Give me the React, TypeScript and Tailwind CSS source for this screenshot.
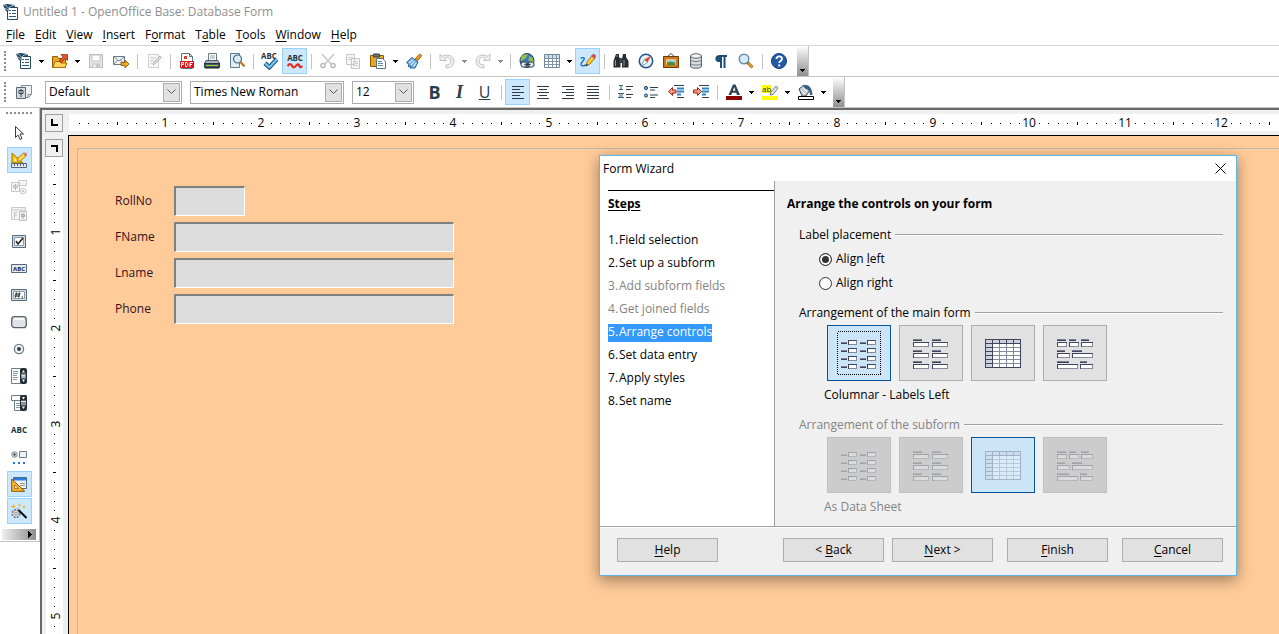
import type { ReactNode } from "react";
import clsx from "clsx";

// "&" marks the accelerator key, as in a menu resource
function Mnemonic({ text }: { text: string }) {
  const at = text.indexOf("&");
  if (at < 0) return <>{text}</>;
  return (
    <span className="whitespace-pre">
      {text.slice(0, at)}
      <u className="underline-offset-2">{text[at + 1]}</u>
      {text.slice(at + 2)}
    </span>
  );
}

function Svg({ children, size = 16 }: { children: ReactNode; size?: number }) {
  return (
    <svg width={size} height={size} viewBox="0 0 16 16" fill="none" aria-hidden="true">
      {children}
    </svg>
  );
}

const writerIcon = (
  <Svg>
    <path d="M4.500 3.500h10v12h-10z" fill="#fff" stroke="#2c4a5e" />
    <path d="M0 1l4-1 8 1v3H6l-1 4-2-1z" fill="#20465e" />
    <path d="M1 1c2 .3 3.500 1.500 4.500 3.500C7 2 9 1.500 12 1.500M2 4l3 2" stroke="#a9c2d1" />
    <path d="M6 6.500h2M9 6.500h4M6 9.500h2M9 9.500h4M6 12.500h7" stroke="#2c5f82" />
  </Svg>
);

const icons: Record<string, ReactNode> = {
  open: (
    <Svg>
      <path d="M.5 14.500v-11h5l1 2h7v9z" fill="#e8a91f" stroke="#9a5b00" />
      <path d="M1 14.500l2-6h5l1 1.500h6l-2 4.500z" fill="#ffd35c" stroke="#b06f00" />
      <path d="M7 8l4-4-2-2.500h6.500V7.500l-2.200-2-4 4z" fill="#e4572e" stroke="#8d2000" strokeWidth=".7" />
    </Svg>
  ),
  save: (
    <Svg>
      <path d="M1.500 1.500h13v13h-13z" fill="#e6e6e6" stroke="#b9b9b9" />
      <path d="M4 2h8v6H4z" fill="#fff" stroke="#c4c4c4" />
      <path d="M4 10.500h8V15H4z" fill="#c9c9c9" />
      <path d="M5.500 11.500h2V14h-2z" fill="#fff" />
    </Svg>
  ),
  mail: (
    <Svg>
      <path d="M.5 3.500h11v8H.5z" fill="#eef1f4" stroke="#6a7986" />
      <path d="M1 4l5 4 5-4M1 11l3.500-4M11 11L7.500 7" stroke="#7d8b97" />
      <path d="M8 9.500h4V7l4 4-4 4v-2.500H8z" fill="#f6a623" stroke="#8c4a00" strokeWidth=".8" />
    </Svg>
  ),
  edit: (
    <Svg>
      <path d="M2.500 1.500h10v13h-10z" fill="#f7f7f7" stroke="#d0d0d0" />
      <path d="M4.500 5h5M4.500 7.500h3M4.500 10h2" stroke="#c6c6c6" />
      <path d="M7 12l1-3 6-6 1.500 1.500-6 6z" fill="#dcdcdc" stroke="#b8b8b8" />
    </Svg>
  ),
  pdf: (
    <Svg>
      <path d="M2.500.5h8l3 3v12h-11z" fill="#fff" stroke="#5b7285" />
      <path d="M10.500.5v3h3" stroke="#5b7285" />
      <path d="M5 3h3v3H5z" fill="#d7432f" />
      <path d="M1 8h14v7H1z" fill="#e01515" />
      <path d="M2.500 14v-4.500h2v2h-2M6.500 9.500v4h1.500l.8-.8V10.300l-.8-.8zM11 14V9.500h3M11 11.500h2" stroke="#fff" />
    </Svg>
  ),
  print: (
    <Svg>
      <path d="M4.500.5h8v8h-8z" fill="#fff" stroke="#6c7a86" />
      <path d="M6 3h5M6 5h5" stroke="#8fa3b3" />
      <path d="M2 7.500h12l1.500 3H.5z" fill="#a9b4bd" stroke="#4a5a66" />
      <path d="M.5 10.500h15v4H.5z" fill="#4a5a66" stroke="#26333d" />
      <path d="M2 12.500h12" stroke="#8fd12e" />
      <path d="M1 15h14" stroke="#17212a" />
    </Svg>
  ),
  preview: (
    <Svg>
      <path d="M1.500.5h9v14h-9z" fill="#e3ebf2" stroke="#5d7990" />
      <circle cx="8.500" cy="6" r="4" fill="#d4ecfa" stroke="#45657f" strokeWidth="1.200" />
      <path d="M11.500 9l4 4.500" stroke="#c1791b" strokeWidth="2.400" />
    </Svg>
  ),
  spell: (
    <Svg size={18}>
      <text x="0" y="6" className="fill-[#26303a] font-bold" fontSize="7">ABC</text>
      <path d="M3.500 10l4 3.500L14 6.500" stroke="#1c5687" strokeWidth="4" />
      <path d="M3.500 10l4 3.500L14 6.500" stroke="#7fc4ee" strokeWidth="2" />
    </Svg>
  ),
  autospell: (
    <Svg size={18}>
      <text x="1" y="8" className="fill-[#26303a] font-bold" fontSize="7">ABC</text>
      <path d="M1.500 12.500c1.500-2.500 3-2 4 0s2.500 1 3.500-.5 2.500-1.500 3 .5 2 .5 2.500 0" stroke="#e02b20" strokeWidth="2" />
    </Svg>
  ),
  cut: (
    <Svg>
      <path d="M2 1l9 10M14 1L5 11" stroke="#c9c9c9" strokeWidth="1.600" />
      <circle cx="3" cy="12.500" r="2" stroke="#b9b9b9" strokeWidth="1.500" />
      <circle cx="13" cy="12.500" r="2" stroke="#b9b9b9" strokeWidth="1.500" />
    </Svg>
  ),
  copy: (
    <Svg>
      <path d="M1.500 1.500h8v10h-8zM6.500 5.500h8v10h-8z" fill="#f6f6f6" stroke="#c6c6c6" />
      <path d="M3 4.500h5M3 6.500h3M8 8.500h5M8 10.500h5M8 12.500h5" stroke="#d0d0d0" />
    </Svg>
  ),
  paste: (
    <Svg>
      <path d="M.5 2.500h13v11H.5z" fill="#e9a820" stroke="#8b5a00" />
      <path d="M3.500 1h6v3h-6z" fill="#6a747d" stroke="#39434c" />
      <path d="M6.500 5.500h6l3 3v7h-9z" fill="#fff" stroke="#53748c" />
      <path d="M8 8.500h4M8 10.500h5M8 12.500h5" stroke="#5f88a6" />
    </Svg>
  ),
  brush: (
    <Svg>
      <path d="M9 6l4.500-5L16 2.500 11.500 8z" fill="#e0952a" stroke="#8c4e00" strokeWidth=".7" />
      <path d="M.5 9.500L6 4.500l6 4.500-3 6H4l1-2-3 .5 1-2z" fill="#7fb5e3" stroke="#25609a" />
      <path d="M3 10l4-3M5 12l3.500-3.500M8 13.500L10 10" stroke="#dff0fc" />
    </Svg>
  ),
  undo: (
    <Svg>
      <path d="M1 1v6.500h6.500L5 5.500C8 3 12 5 12 8s-2 4-5 4v3c5 0 8-3 8-7C15 2.500 8 .5 3 3.500z" fill="#f0f0f0" stroke="#c2c2c2" />
    </Svg>
  ),
  redo: (
    <Svg>
      <path d="M15 1v6.500H8.500L11 5.500C8 3 4 5 4 8s2 4 5 4v3c-5 0-8-3-8-7C1 2.500 8 .5 13 3.500z" fill="#f0f0f0" stroke="#c2c2c2" />
    </Svg>
  ),
  globe: (
    <Svg>
      <circle cx="8" cy="7.500" r="7" fill="#3b78b5" stroke="#23415c" />
      <path d="M2 4c2-3 5-3 7-2.500L7 5 4 7 1.500 8zM10 3l4 2 .5 4-3 1-2-3z" fill="#8fbd4f" />
      <rect x="2" y="9" width="6" height="5" rx="2" fill="#e4e8ea" stroke="#2e3b44" />
      <rect x="9" y="9" width="6" height="5" rx="2" fill="#e4e8ea" stroke="#2e3b44" />
      <path d="M5.500 11.500h6" stroke="#2e3b44" strokeWidth="1.500" />
    </Svg>
  ),
  table: (
    <Svg>
      <path d="M.5 1.500h15v13H.5z" fill="#fff" stroke="#6f8799" />
      <path d="M1 2h14v3H1z" fill="#cfdde8" />
      <path d="M1 5.500h14M1 8.500h14M1 11.500h14M4.500 2v12M8.500 2v12M12.500 2v12" stroke="#7f95a6" />
    </Svg>
  ),
  draw: (
    <Svg>
      <path d="M.5 5.500c2-1.500 4.500-1 3.500 1S1 9.500 1 11.500s3 1.500 5 .5" stroke="#1b6fd0" strokeWidth="1.400" />
      <path d="M6 13l1-4 5-6.500 3 2.500-5 6z" fill="#ffce3a" stroke="#8a5a00" strokeWidth=".8" />
      <path d="M11.500 3l2-2L16 3l-1.500 2.500z" fill="#e8545d" stroke="#8a2a30" strokeWidth=".5" />
      <path d="M6 13l.6-2.200 1.600 1.400z" fill="#222" />
    </Svg>
  ),
  find: (
    <Svg>
      <path d="M3 1h3v3l1.500 2v8.500H.5V8zM10 1h3v3l2.500 4v6.500H9V6z" fill="#272c31" />
      <path d="M6.500 5h3v5h-3z" fill="#3d454c" />
      <path d="M2.500 7v6M11 7v6M4 2v2" stroke="#8d99a3" />
    </Svg>
  ),
  compass: (
    <Svg>
      <circle cx="8" cy="8" r="6.700" fill="#e6f0f8" stroke="#22568c" strokeWidth="1.500" />
      <path d="M13 2.500L9.500 9.500 6.500 6.500z" fill="#e8432d" />
      <path d="M3 13.500l3.500-7 3 3z" fill="#fff" stroke="#5b6c7a" strokeWidth=".7" />
    </Svg>
  ),
  gallery: (
    <Svg>
      <path d="M5 3l3-2.500L11 3" stroke="#555" />
      <path d="M.5 3.500h15v11H.5z" fill="#c77a1f" stroke="#6e3b00" />
      <path d="M3.500 6.500h9v5h-9z" fill="#9bd1f2" stroke="#f2c36b" />
      <path d="M4 9.500l3-1 5 1V12H4z" fill="#4e8b33" />
    </Svg>
  ),
  database: (
    <Svg>
      <path d="M2.500 3v10c0 3 11 3 11 0V3" fill="#d9dde0" stroke="#59636b" />
      <ellipse cx="8" cy="3" rx="5.500" ry="2.200" fill="#f3f5f6" stroke="#59636b" />
      <path d="M2.500 6.500c0 2.700 11 2.700 11 0M2.500 10c0 2.700 11 2.700 11 0" stroke="#737d85" />
    </Svg>
  ),
  pilcrow: (
    <Svg>
      <path d="M14 2H7C1 2 1 9 6 9h1v6h2V4h1.500v11h2V4H14z" fill="#1e4d78" />
    </Svg>
  ),
  zoom: (
    <Svg>
      <circle cx="6" cy="6" r="4.800" fill="#d3ebfa" stroke="#6b8ba5" strokeWidth="1.400" />
      <path d="M9.500 9.500l5 5" stroke="#8c5210" strokeWidth="3" />
      <path d="M10 10l4.500 4.500" stroke="#f0b03f" strokeWidth="1.500" />
    </Svg>
  ),
  help: (
    <Svg>
      <circle cx="8" cy="8" r="7.500" fill="#2459a8" stroke="#163c79" />
      <path d="M5.500 6c0-3.500 5.500-3.500 5.500-.3C11 8 8.200 7.800 8.200 10" stroke="#fff" strokeWidth="1.900" />
      <path d="M7.200 11.500h2v2h-2z" fill="#fff" />
    </Svg>
  ),
  styles: (
    <Svg>
      <path d="M5.500 1.500h10v9l-3 3h-7z" fill="#eef1f3" stroke="#7e8d98" />
      <path d="M15 10.500h-3v3" stroke="#7e8d98" />
      <path d="M.5 3.500h9v11h-9z" fill="#d3dbe1" stroke="#5d6c78" />
      <path d="M3 6.500h4v3H3zM5 5v8" fill="#fff" stroke="#34424d" />
    </Svg>
  ),
  left: <Svg><path d="M2 2.500h12M2 5.500h8M2 8.500h12M2 11.500h8M2 14.500h12" stroke="#2f3a42" /></Svg>,
  center: <Svg><path d="M2 2.500h12M4 5.500h8M2 8.500h12M4 11.500h8M2 14.500h12" stroke="#2f3a42" /></Svg>,
  right: <Svg><path d="M2 2.500h12M6 5.500h8M2 8.500h12M6 11.500h8M2 14.500h12" stroke="#2f3a42" /></Svg>,
  justify: <Svg><path d="M2 2.500h12M2 5.500h12M2 8.500h12M2 11.500h12M2 14.500h12" stroke="#2f3a42" /></Svg>,
  numbered: (
    <Svg>
      <path d="M1 1.500h4M3 1.500v4M1 5.500h4M0 9.500h6M2 9.500v4M4 9.500v4M0 13.500h6" stroke="#3b6384" />
      <path d="M8 2.500h7M8 5.500h5M8 10.500h7M8 13.500h5" stroke="#333c44" />
    </Svg>
  ),
  bullets: (
    <Svg>
      <circle cx="3" cy="4" r="1.600" fill="#7fb2da" stroke="#204a6d" />
      <circle cx="3" cy="11.500" r="1.600" fill="#7fb2da" stroke="#204a6d" />
      <path d="M7 3.500h8M7 6h5M7 11h8M7 13.500h5" stroke="#333c44" />
    </Svg>
  ),
  outdent: (
    <Svg>
      <path d="M6 1.500h10M9 13.500h7" stroke="#333c44" />
      <path d="M9 4.500h7M9 7.500h7M9 10.500h4" stroke="#2c86c8" strokeWidth="2" />
      <path d="M.5 7.500l4-4V6H8v3H4.500v2.500z" fill="#f2a08a" stroke="#a02411" />
    </Svg>
  ),
  indent: (
    <Svg>
      <path d="M6 1.500h10M9 13.500h7" stroke="#333c44" />
      <path d="M9 4.500h7M9 7.500h7M9 10.500h4" stroke="#2c86c8" strokeWidth="2" />
      <path d="M8.500 7.500l-4-4V6H.5v3h4v2.500z" fill="#f2a08a" stroke="#a02411" />
    </Svg>
  ),
  fontcolor: (
    <Svg>
      <path d="M2.500 11L7 .5h2.500L14 11h-3l-.8-2.300H6L5.300 11z" fill="#2b4357" />
      <path d="M6.800 6.700h2.700L8.200 3z" fill="#fff" />
      <path d="M0 12h16v4H0z" fill="#8b0000" />
    </Svg>
  ),
  highlight: (
    <Svg>
      <path d="M0 1h9v8H0z" fill="#ffff00" />
      <text x="0" y="8" fontSize="8" className="fill-[#26303a]">ab</text>
      <path d="M8 11l1-3 5-6 2 2-5 6.500z" fill="#dfe6ea" stroke="#53616b" strokeWidth=".8" />
      <path d="M0 12h16v4H0z" fill="#ffff00" />
    </Svg>
  ),
  fill: (
    <Svg>
      <path d="M1 5l5-4 6 5-4 6H4z" fill="#c3ccd2" stroke="#3f4b54" />
      <path d="M5 1.500c5-2 9 1 9.500 9.500H12c0-4-2-6-5-6.500" fill="#33617f" />
      <path d="M3 6l4 4M5 4l4 4" stroke="#f4f6f7" />
      <path d="M.5 12.500h15v3H.5z" fill="#fff" stroke="#000" />
    </Svg>
  ),
  pointer: (
    <Svg>
      <path d="M4.500 1.500v11l2.500-2.500 2 4.500 2-1-2-4.500h3.500z" fill="#fff" stroke="#333c44" />
    </Svg>
  ),
  design: (
    <Svg>
      <path d="M1 1v10h11z" fill="#ffc400" stroke="#a86e00" />
      <path d="M3.500 6v3h3z" fill="#fff" />
      <path d="M6 9l1-3 5.500-5L16 3l-6.500 6z" fill="#ffd84d" stroke="#936000" strokeWidth=".7" />
      <path d="M12 1l3-.5L16 3l-2 1.500z" fill="#e66b7c" />
      <path d="M.5 11.500h15v4H.5z" fill="#dfe5ea" stroke="#53697b" />
      <path d="M3.500 12v2M6.500 12v2M9.500 12v2M12.500 12v2" stroke="#53697b" />
    </Svg>
  ),
  control: (
    <Svg>
      <path d="M.5 3.500h8v9h-8zM7.500 1.500h8v5h-8z" fill="#f4f4f4" stroke="#c9c9c9" />
      <path d="M2.500 6.500h4v2h-4zM4.500 5v6" stroke="#b8b8b8" />
      <circle cx="12" cy="12" r="3" fill="#f4f4f4" stroke="#c9c9c9" />
      <circle cx="12" cy="12" r="1" fill="#b8b8b8" />
    </Svg>
  ),
  formprops: (
    <Svg>
      <path d="M.5 1.500h14v12H.5zM.5 4h14" fill="#f4f4f4" stroke="#c9c9c9" />
      <path d="M3.500 12V6.500H6M3.500 9H6" stroke="#c0c0c0" />
      <path d="M8.500 5.500h7v9h-7z" fill="#efefef" stroke="#c0c0c0" />
      <path d="M10.500 8.500h3v2h-3zM12 7v6" stroke="#a8a8a8" />
    </Svg>
  ),
  checkbox: (
    <Svg>
      <path d="M1.500 2.500h13v12h-13z" fill="#d6dee4" stroke="#566b7b" />
      <path d="M3.500 4.500h9v8h-9z" fill="#fff" stroke="#8a9aa6" />
      <path d="M5 8l2 3 5-6" stroke="#1c242a" strokeWidth="1.600" />
    </Svg>
  ),
  textbox: (
    <Svg>
      <path d="M.5 4.500h15v8H.5z" fill="#e2e8ec" stroke="#566b7b" />
      <text x="2" y="11" fontSize="6" className="fill-[#1c2b38] font-bold">ABC</text>
    </Svg>
  ),
  formatted: (
    <Svg>
      <path d="M.5 2.500h15v11H.5z" fill="#d6dee4" stroke="#566b7b" />
      <path d="M2.500 4.500h11v7h-11z" fill="#fff" stroke="#8a9aa6" />
      <path d="M5.500 5.500l-1 5M8.500 5.500l-1 5M4 7h5.500M3.500 9H9M10.500 10h1.500" stroke="#1c242a" />
    </Svg>
  ),
  pushbutton: (
    <Svg>
      <rect x=".7" y="2.700" width="14.600" height="11" rx="3" fill="#dfe3e7" stroke="#59626a" strokeWidth="1.300" />
      <path d="M3 5h10" stroke="#fff" strokeWidth="1.500" />
    </Svg>
  ),
  option: (
    <Svg>
      <circle cx="8" cy="8" r="4.600" fill="#f0f3f5" stroke="#6d7e8b" strokeWidth="1.300" />
      <circle cx="8" cy="8" r="2" fill="#333d45" />
    </Svg>
  ),
  listbox: (
    <Svg>
      <path d="M.5.5h9v15h-9z" fill="#fff" stroke="#6d7e8b" />
      <path d="M2 3.500h5M2 5.500h5M2 7.500h4M2 9.500h5M2 11.500h4" stroke="#8a9aa6" />
      <rect x="9.500" y=".5" width="6" height="15" rx="1" fill="#8a939b" stroke="#272f36" />
      <path d="M10 1h5v4.500h-5zM10 10.500h5V15h-5z" fill="#272f36" />
      <path d="M11 4.500l1.500-2.500L14 4.500zM11 11.500l1.500 2.500 1.500-2.500z" fill="#fff" />
      <path d="M11 7.500h3M11 9h3" stroke="#e4e8ea" />
    </Svg>
  ),
  combobox: (
    <Svg>
      <path d="M.5.5h15v5H.5zM3.500 5.500h7v10h-7z" fill="#fff" stroke="#6d7e8b" />
      <path d="M5 8.500h4M5 10.500h4M5 12.500h4" stroke="#8a9aa6" />
      <rect x="9.500" y=".5" width="6" height="15" rx="1" fill="#8a939b" stroke="#272f36" />
      <path d="M10 1h5v4.500h-5zM10 10.500h5V15h-5z" fill="#272f36" />
      <path d="M11 2l1.500 2.500L14 2zM11 11.500l1.500 2.500 1.500-2.500z" fill="#fff" />
      <path d="M10 6.500h5" stroke="#e5e8ea" />
    </Svg>
  ),
  label: (
    <Svg>
      <text x="0" y="11" fontSize="8" className="fill-[#1f3242] font-bold">ABC</text>
    </Svg>
  ),
  more: (
    <Svg>
      <circle cx="3.500" cy="5.500" r="2.700" fill="#f0f3f5" stroke="#6d7e8b" />
      <circle cx="3.500" cy="5.500" r="1.200" fill="#333d45" />
      <path d="M8.500 2.500h7v6h-7z" fill="#f0f3f5" stroke="#6d7e8b" />
      <path d="M2 13h2v2H2zM7 13h2v2H7zM12 13h2v2h-2z" fill="#2a6df0" />
    </Svg>
  ),
  formdesign: (
    <Svg>
      <path d="M2.500 1.500h13v11h-13z" fill="#eef2f5" stroke="#4c6c88" />
      <path d="M3 2h12v2.500H3z" fill="#2e7de0" />
      <path d="M9 7.500h5M9 9.500h5" stroke="#8a9aa6" />
      <path d="M.7 3v12.300h13z" fill="#fdb827" stroke="#8a5200" />
      <path d="M3.500 9v3.500h4z" fill="#fff" stroke="#8a5200" strokeWidth=".7" />
    </Svg>
  ),
  wizard: (
    <Svg>
      <circle cx="5" cy="10.500" r="3.700" fill="#e6e9eb" stroke="#7b868e" strokeWidth="2" strokeDasharray="2 1" />
      <circle cx="5" cy="10.500" r="1.300" fill="#fff" stroke="#7b868e" />
      <path d="M7 6.500l8.500 8.500" stroke="#111" strokeWidth="2" />
      <path d="M6 5.500l1.500 1.500" stroke="#aaa" strokeWidth="2" />
      <path d="M2.500 1l.8 1.700L5 3.500l-1.700.8L2.500 6l-.8-1.700L0 3.500l1.700-.8zM8.500 0l.6 1.400 1.400.6-1.400.6L8.500 4l-.6-1.400L6.500 2l1.400-.6zM13 2l.6 1.400L15 4l-1.400.6L13 6l-.6-1.400L11 4l1.400-.6z" fill="#f6b800" />
    </Svg>
  ),
};

function ToolButton({ name, active, children }: { name: string; active?: boolean; children?: ReactNode }) {
  return (
    <button
      type="button"
      aria-label={name}
      className={clsx(
        "flex h-[26px] w-[25px] shrink-0 items-center justify-center border",
        active ? "border-[#99d1ff] bg-[#cce8ff]" : "border-transparent",
      )}
    >
      {children ?? icons[name]}
    </button>
  );
}

function Arrow({ muted }: { muted?: boolean }) {
  return (
    <button type="button" aria-label="More options" className="flex w-[11px] shrink-0 justify-center">
      <svg width="5" height="3" viewBox="0 0 5 3" shapeRendering="crispEdges">
        <path d="M0 0h5L2.500 3z" className={muted ? "fill-[#8a8a8a]" : "fill-black"} />
      </svg>
    </button>
  );
}

function Separator() {
  return (
    <span className="flex w-2 shrink-0 justify-center">
      <span className="h-[15px] w-px bg-[#c3c3c3]" />
    </span>
  );
}

function Grip() {
  return <span className="mr-[5px] ml-1 h-5 w-0 border-l-2 border-dotted border-[#8c8c8c]" />;
}

function Overflow() {
  return (
    <button
      type="button"
      aria-label="Toolbar options"
      className="flex w-[11px] items-end justify-center self-stretch bg-linear-to-b from-white to-[#8f8f8f] pb-1"
    >
      <svg width="5" height="3" viewBox="0 0 5 3" shapeRendering="crispEdges">
        <path d="M0 0h5L2.500 3z" />
      </svg>
    </button>
  );
}

// items: a name, "|" for a separator, "v" or "-" for a live or greyed arrow
function Tools({ items, active }: { items: string; active?: string }) {
  return items.split(" ").map((item, i) => {
    if (item === "|") return <Separator key={i} />;
    if (item === "v" || item === "-") return <Arrow key={i} muted={item === "-"} />;
    return <ToolButton key={i} name={item} active={active?.split(" ").includes(item)} />;
  });
}

function Combo({ label, value, className }: { label: string; value: string; className: string }) {
  return (
    <span className={clsx("relative mr-2 h-[23px] shrink-0", className)}>
      <select
        aria-label={label}
        defaultValue={value}
        className="h-full w-full appearance-none border border-[#acacac] bg-white pl-[3px]"
      >
        <option>{value}</option>
      </select>
      <span className="pointer-events-none absolute inset-y-0.5 right-0.5 flex w-[17px] items-center justify-center border border-[#acacac] bg-[#e1e1e1]">
        <svg width="9" height="6" viewBox="0 0 9 6" fill="none" stroke="#555">
          <path d="M.5.5l4 4 4-4" />
        </svg>
      </span>
    </span>
  );
}

const menus = ["&File", "&Edit", "&View", "&Insert", "F&ormat", "T&able", "&Tools", "&Window", "&Help"];

const formTools = [
  "pointer", "design", "control", "formprops", "checkbox", "textbox", "formatted", "pushbutton",
  "option", "listbox", "combobox", "label", "more", "formdesign", "wizard",
];
const activeFormTools = ["design", "formdesign", "wizard"];

const INCH = 96;

// start: how many pixels of the ruler lie hidden before its first visible one
function Ruler({ vertical, inches, start = 0 }: { vertical?: boolean; inches: number; start?: number }) {
  const length = inches * INCH;
  const marks = Array.from({ length: inches * 10 - 1 }, (_, i) => i + 1).filter(
    (n) => (n * INCH) / 10 > start,
  );
  return (
    <svg
      width={vertical ? 17 : length - start}
      height={vertical ? length - start : 17}
      viewBox={vertical ? `0 ${start} 17 ${length - start}` : `${start} 0 ${length - start} 17`}
      className="block shrink-0"
      shapeRendering="crispEdges"
    >
      {marks.map((n) => {
        const at = Math.round((n * INCH) / 10);
        if (n % 10 === 0) {
          return vertical ? (
            <text key={n} x={9} y={at} textAnchor="middle" dominantBaseline="central" transform={`rotate(-90 9 ${at})`} fontSize={12}>
              {n / 10}
            </text>
          ) : (
            <text key={n} x={at} y={13} textAnchor="middle" fontSize={12}>
              {n / 10}
            </text>
          );
        }
        const size = n % 5 === 0 ? 3 : 1;
        return vertical ? (
          <rect key={n} x={8 - (size - 1) / 2} y={at} width={size} height={1} />
        ) : (
          <rect key={n} x={at} y={9 - (size - 1) / 2} width={1} height={size} />
        );
      })}
    </svg>
  );
}

function TabCorner({ d }: { d: string }) {
  return (
    <button type="button" aria-label="Tab type" className="flex size-[18px] shrink-0 items-center justify-center border border-[#a0a0a0] bg-[#f0f0f0]">
      <svg width="7" height="7" viewBox="0 0 7 7" fill="none" stroke="#000" strokeWidth="2">
        <path d={d} />
      </svg>
    </button>
  );
}

const fields = [
  { name: "RollNo", short: true },
  { name: "FName" },
  { name: "Lname" },
  { name: "Phone" },
];

const steps = [
  { text: "Field selection" },
  { text: "Set up a subform" },
  { text: "Add subform fields", disabled: true },
  { text: "Get joined fields", disabled: true },
  { text: "Arrange controls", current: true },
  { text: "Set data entry" },
  { text: "Apply styles" },
  { text: "Set name" },
];

// [x, y, width] of the label bars and field boxes in each thumbnail
const thumbs: { name: string; bars: number[][]; boxes: number[][] }[] = [
  {
    name: "Columnar - Labels Left",
    bars: [15, 23, 31, 39].flatMap((y) => [[14, y + 2, 6], [33, y + 2, 6]]),
    boxes: [15, 23, 31, 39].flatMap((y) => [[21, y, 9], [40, y, 9]]),
  },
  {
    name: "Columnar - Labels on Top",
    bars: [14, 25, 36].flatMap((y) => [[14, y, 9], [33, y, 9]]),
    boxes: [17, 28, 39].flatMap((y) => [[14, y, 16], [33, y, 16]]),
  },
  { name: "As Data Sheet", bars: [], boxes: [] },
  {
    name: "In Blocks - Labels Above",
    bars: [[14, 14, 9], [26, 14, 7], [38, 14, 8], [14, 25, 8], [29, 25, 10], [14, 36, 12], [37, 36, 7]],
    boxes: [[14, 17, 10], [26, 17, 10], [38, 17, 12], [14, 28, 13], [29, 28, 21], [14, 39, 21], [37, 39, 13]],
  },
];

function Thumbnails({ selected, disabled }: { selected: number; disabled?: boolean }) {
  return (
    <div className="ml-7 flex gap-2">
      {thumbs.map(({ name, bars, boxes }, i) => (
        <button
          key={name}
          type="button"
          aria-label={name}
          disabled={disabled}
          className={clsx(
            "h-14 w-16 border",
            i === selected && "border-[#005499] bg-[#cce4f7]",
            i !== selected && (disabled ? "border-[#bfbfbf] bg-[#cccccc]" : "border-[#adadad] bg-[#e1e1e1]"),
          )}
        >
          <svg viewBox="1 1 62 54" className={clsx("block", disabled && "opacity-30")} fill="none" shapeRendering="crispEdges">
            {bars.map(([x, y, w]) => (
              <g key={`${x},${y}`}>
                <rect x={x} y={y} width={w} height={1} fill="#777c8e" />
                <rect x={x} y={y + 1} width={w} height={1} fill="#41455c" />
              </g>
            ))}
            {boxes.map(([x, y, w]) => (
              <g key={`${x},${y}`}>
                <rect x={x} y={y} width={w} height={5} fill="#fff" />
                <path d={`M${x + 0.5} ${y + 4.5}h${w - 1}v-4`} stroke="#868a9b" />
                <path d={`M${x + 0.5} ${y + 5}v-4.500h${w - 0.5}`} stroke="#41455c" />
              </g>
            ))}
            {bars.length === 0 && (
              <>
                <path d="M14 14h36v29H14z" fill="#fff" />
                <path d="M14 14h36v4H14zM14 14h7v29h-7z" fill="#cdd1dc" />
                <path d="M21 22.500h29M21 26.500h29M21 30.500h29M21 34.500h29M21 38.500h29M28.500 18v25M35.500 18v25M42.500 18v25" stroke="#868a9b" />
                <path d="M14.500 14.500h35v28h-35zM14 18.500h36M21.500 14v29M28.500 14v4M35.500 14v4M42.500 14v4M14 22.500h7M14 26.500h7M14 30.500h7M14 34.500h7M14 38.500h7" stroke="#41455c" />
              </>
            )}
            {i === selected && !disabled && <rect x="10.500" y="6.500" width="43" height="43" stroke="#000" strokeDasharray="1 1" />}
          </svg>
        </button>
      ))}
    </div>
  );
}

function GroupTitle({ children }: { children: ReactNode }) {
  return (
    <div className="flex h-6 items-center gap-1">
      <span>{children}</span>
      <span className="h-0.5 flex-1 border-t border-[#a0a0a0] bg-white" />
    </div>
  );
}

function DialogButton({ text, className }: { text: string; className?: string }) {
  return (
    <button type="button" className={clsx("h-6 w-[101px] border border-[#adadad] bg-[#e1e1e1]", className)}>
      <Mnemonic text={text} />
    </button>
  );
}

function FormWizard() {
  return (
    <div
      role="dialog"
      aria-label="Form Wizard"
      className="absolute top-[155px] left-[599px] flex w-[638px] flex-col border border-[#5fb4e8] bg-[#f0f0f0] shadow-[0_4px_14px_rgba(0,0,0,0.4)]"
    >
      <div className="flex h-[25px] items-center justify-between bg-white pr-2.5 pl-[3px]">
        <span>Form Wizard</span>
        <button type="button" aria-label="Close">
          <svg width="11" height="11" viewBox="0 0 11 11" stroke="#000">
            <path d="M.5.5l10 10M10.500.5l-10 10" />
          </svg>
        </button>
      </div>

      <div className="flex h-[346px] border-b border-[#a0a0a0]">
        <div className="w-[175px] border-r border-[#a0a0a0] bg-white pt-[9px] pl-2">
          <h2 className="border-t border-black pt-[5px] font-bold underline underline-offset-2">Steps</h2>
          <ol className="pt-[17px]">
            {steps.map((step, i) => (
              <li key={step.text} className="flex h-[23px] items-center">
                <span
                  className={clsx(
                    "flex h-[18px] leading-[16px]",
                    step.current && "bg-[#3399ff] text-white",
                    step.disabled && "text-[#838383]",
                  )}
                >
                  <span className="w-[11px]">{i + 1}.</span>
                  {step.text}
                </span>
              </li>
            ))}
          </ol>
        </div>

        <div className="flex-1 pt-[15px] pr-[13px] pl-3">
          <h2 className="font-bold">Arrange the controls on your form</h2>
          <div className="pl-3">
            <fieldset className="pt-[11px]">
              <GroupTitle>Label placement</GroupTitle>
              {["Align &left", "Ali&gn right"].map((text, i) => (
                <label key={text} className="ml-5 flex h-6 items-center gap-1">
                  <input
                    type="radio"
                    name="placement"
                    defaultChecked={i === 0}
                    className="size-[13px] appearance-none rounded-full border border-[#333] bg-white checked:bg-[#333] checked:shadow-[inset_0_0_0_2px_#fff]"
                  />
                  <Mnemonic text={text} />
                </label>
              ))}
            </fieldset>
            <div className="pt-1.5">
              <GroupTitle>Arrangement of the main form</GroupTitle>
              <Thumbnails selected={0} />
              <p className="ml-[25px] h-8 pt-1.5">Columnar - Labels Left</p>
            </div>
            <div className="text-[#838383]">
              <GroupTitle>Arrangement of the subform</GroupTitle>
              <Thumbnails selected={2} disabled />
              <p className="ml-[25px] pt-1.5">As Data Sheet</p>
            </div>
          </div>
        </div>
      </div>

      <div className="flex h-12 items-center border-t border-white pr-[13px] pb-[3px] pl-[17px]">
        <DialogButton text="&Help" />
        <DialogButton text="< &Back" className="ml-auto" />
        <DialogButton text="&Next >" className="ml-2" />
        <DialogButton text="&Finish" className="ml-3.5" />
        <DialogButton text="&Cancel" className="ml-3.5" />
      </div>
    </div>
  );
}

export default function App() {
  return (
    <div className="relative flex h-screen flex-col overflow-hidden bg-white font-['Open_Sans',sans-serif] text-xs text-black">
      <header className="flex h-6 shrink-0 items-center gap-1 pl-[3px] text-[#8f8f8f]">
        {writerIcon}
        <h1>Untitled 1 - OpenOffice Base: Database Form</h1>
      </header>

      <nav className="flex h-[22px] shrink-0 items-center gap-2.5 border-b border-[#d7d7d7] pl-1.5">
        {menus.map((menu) => (
          <button key={menu} type="button">
            <Mnemonic text={menu} />
          </button>
        ))}
      </nav>

      <div className="shrink-0 border-b border-[#c4c4c4]">
        <div className="flex h-[30px] w-fit items-center border-r border-[#c4c4c4]">
          <Grip />
          <ToolButton name="New">{writerIcon}</ToolButton>
          <Arrow />
          <Tools
            items="open v save mail | edit | pdf print preview | spell autospell | cut copy paste v brush | undo - redo - | globe table v draw | find compass gallery database pilcrow zoom | help"
            active="autospell draw"
          />
          <span className="w-1.5" />
          <Overflow />
        </div>
      </div>

      <div className="shrink-0 border-b border-[#c4c4c4]">
        <div className="flex h-[30px] w-fit items-center border-r border-[#c4c4c4]">
          <Grip />
          <ToolButton name="styles" />
          <span className="w-[9px]" />
          <Combo label="Paragraph style" value="Default" className="w-[137px]" />
          <Combo label="Font name" value="Times New Roman" className="w-[154px]" />
          <Combo label="Font size" value="12" className="w-[62px]" />
          <ToolButton name="Bold">
            <b className="text-lg text-[#2b3c4a]">B</b>
          </ToolButton>
          <ToolButton name="Italic">
            <i className="font-['Liberation_Serif',serif] text-lg font-bold text-[#2b3c4a]">I</i>
          </ToolButton>
          <ToolButton name="Underline">
            <u className="text-base text-[#2b3c4a]">U</u>
          </ToolButton>
          <Separator />
          <Tools
            items="left center right justify | numbered bullets outdent indent | fontcolor v highlight v fill v"
            active="left"
          />
          <span className="w-1" />
          <Overflow />
        </div>
      </div>

      <div className="flex min-h-0 flex-1">
        <aside className="flex w-10 shrink-0 flex-col items-center gap-px self-start border-r border-b border-[#c4c4c4] pt-1 pr-px pb-px">
          <span className="mb-[5px] h-0 w-[26px] border-t-2 border-dotted border-[#8c8c8c]" />
          {formTools.map((tool) => (
            <ToolButton key={tool} name={tool} active={activeFormTools.includes(tool)} />
          ))}
          <button
            type="button"
            aria-label="More controls"
            className="mt-1 flex h-[11px] w-[34px] items-center justify-end bg-linear-to-r from-[#eee] to-[#8f8f8f] pr-1"
          >
            <svg width="4" height="7" viewBox="0 0 4 7" shapeRendering="crispEdges">
              <path d="M0 0v7l4-3.500z" />
            </svg>
          </button>
        </aside>

        <main className="flex min-w-0 flex-1 flex-col border-t-2 border-l-2 border-[#696969] bg-[#f0f0f0]">
          <div className="flex h-[25px] shrink-0 items-center gap-1.5 pl-[3px]">
            <TabCorner d="M1 0v6h6" />
            <div className="flex-1 overflow-hidden bg-white">
              <Ruler inches={13} />
            </div>
          </div>
          <div className="flex min-h-0 flex-1">
            <div className="flex w-[26px] shrink-0 flex-col overflow-hidden pt-1 pl-[3px]">
              <TabCorner d="M0 1h6v6" />
              <div className="ml-px w-[17px] flex-1 overflow-hidden bg-white">
                <Ruler vertical inches={6} start={21} />
              </div>
            </div>
            <section className="flex flex-1 border-t border-l border-black bg-[#ffcb99] pt-3 pl-2">
              <form className="flex flex-1 flex-col gap-1.5 border-t border-l border-[#bdb9b4] pt-[37px] pl-[37px]">
                {fields.map(({ name, short }) => (
                  <div key={name} className="flex h-[30px] items-center">
                    <label htmlFor={name} className="w-[59px] text-[#33101f]">
                      {name}
                    </label>
                    <input
                      id={name}
                      className={clsx(
                        "h-full border-t-2 border-r border-b border-l-2 border-t-[#808080] border-r-white border-b-white border-l-[#808080] bg-[#dddddd]",
                        short ? "w-[71px]" : "w-[280px]",
                      )}
                    />
                  </div>
                ))}
              </form>
            </section>
          </div>
        </main>
      </div>

      <FormWizard />
    </div>
  );
}
